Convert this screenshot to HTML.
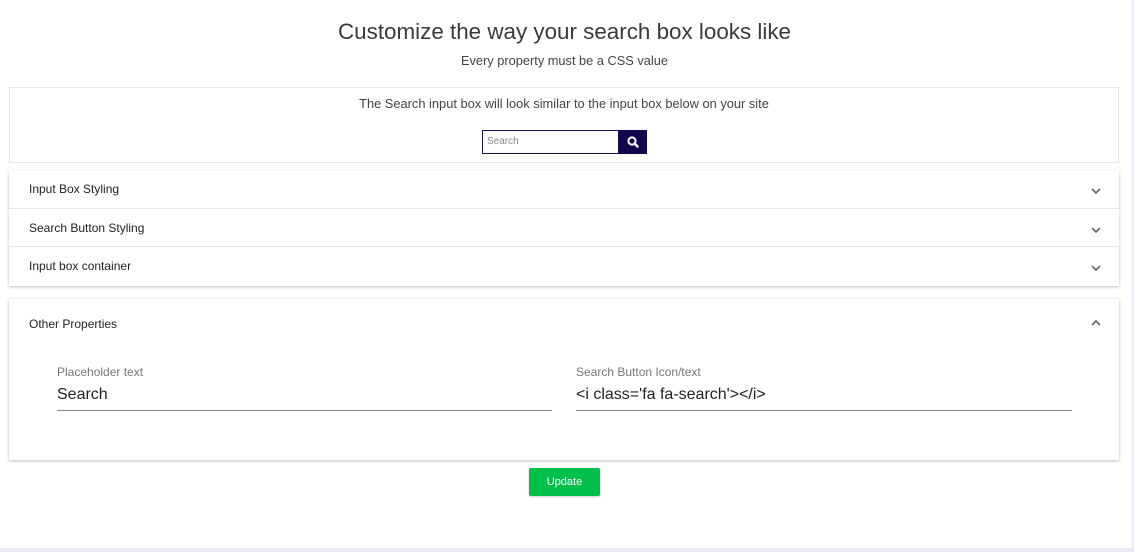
<!DOCTYPE html>
<html><head><meta charset="utf-8"><style>
*{box-sizing:border-box;margin:0;padding:0}
body{width:1134px;height:552px;background:#fff;font-family:"Liberation Sans",sans-serif;position:relative;overflow:hidden;color:#333}
.rs{position:absolute;right:0;top:0;width:2px;height:552px;background:#e8eaf6}
.bs{position:absolute;left:0;bottom:0;width:1134px;height:4px;background:#e8eaf6}
.abs{position:absolute}
h1{position:absolute;top:19px;left:0;width:1129px;text-align:center;font-weight:400;font-size:22.4px;color:#3a3a3a}
.sub{top:53px;left:0;width:1129px;text-align:center;font-size:12.8px;color:#444}
.prev{left:9px;top:87px;width:1110px;height:76px;border:1px solid #e6e6e6}
.prev p{text-align:center;font-size:12.85px;color:#444;margin-top:8px}
.inp{left:482px;top:130px;width:137px;height:24px;border:1px solid #1b0e5e;font-size:10px;color:#888;padding:5px 4px}
.btn{left:619px;top:130px;width:28px;height:24px;background:#13064f}
.acc{left:9px;width:1110px;background:#fff;box-shadow:0 1px 3px rgba(0,0,0,.25)}
.row{height:38.5px;border-bottom:1px solid #e6e6e6;font-size:12px;color:#222;padding:12px 20px;position:relative}
.chev{position:absolute;right:18px;top:17px}
.lbl{font-size:12px;color:#777}
.val{font-size:16px;color:#222;margin-top:7px;padding-bottom:6px;border-bottom:1px solid #888}
.upd{left:529px;top:468px;width:71px;height:28px;background:#00c04b;color:#fff;font-size:11px;text-align:center;line-height:28px;border-radius:2px;box-shadow:0 1px 2px rgba(0,0,0,.2)}
</style></head><body>
<h1>Customize the way your search box looks like</h1>
<div class="abs sub">Every property must be a CSS value</div>
<div class="abs prev"><p>The Search input box will look similar to the input box below on your site</p></div>
<div class="abs inp">Search</div>
<div class="abs btn"><svg width="28" height="24" viewBox="0 0 28 24"><circle cx="13" cy="11" r="3.6" fill="none" stroke="#fff" stroke-width="2"/><path d="M15.5 13.5L18.5 16.5" stroke="#fff" stroke-width="2.4" stroke-linecap="round"/></svg></div>
<div class="abs acc" style="top:170px;height:116px">
<div class="row" style="height:39px">Input Box Styling<svg class="chev" width="10" height="8" viewBox="0 0 10 8"><path d="M1 2l4 4 4-4" fill="none" stroke="#666" stroke-width="1.6"/></svg></div>
<div class="row" style="height:38px">Search Button Styling<svg class="chev" width="10" height="8" viewBox="0 0 10 8"><path d="M1 2l4 4 4-4" fill="none" stroke="#666" stroke-width="1.6"/></svg></div>
<div class="row" style="border:none">Input box container<svg class="chev" width="10" height="8" viewBox="0 0 10 8"><path d="M1 2l4 4 4-4" fill="none" stroke="#666" stroke-width="1.6"/></svg></div>
</div>
<div class="abs acc" style="top:299px;height:161px">
<div class="row" style="border:none;padding-top:18px">Other Properties<svg class="chev" style="top:20px" width="10" height="8" viewBox="0 0 10 8"><path d="M1 6l4-4 4 4" fill="none" stroke="#666" stroke-width="1.6"/></svg></div>
<div class="abs" style="left:48px;top:66px;width:495px"><div class="lbl">Placeholder text</div><div class="val">Search</div></div>
<div class="abs" style="left:567px;top:66px;width:496px"><div class="lbl">Search Button Icon/text</div><div class="val">&lt;i class='fa fa-search'&gt;&lt;/i&gt;</div></div>
</div>
<div class="abs upd">Update</div>
<div class="rs"></div><div class="bs"></div>
</body></html>
